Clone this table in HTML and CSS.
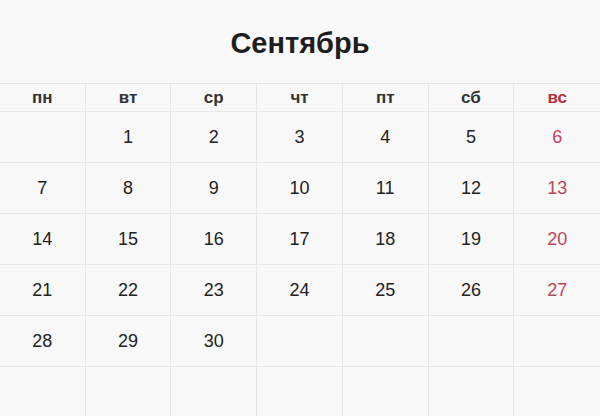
FILE: index.html
```html
<!DOCTYPE html>
<html lang="ru">
<head>
<meta charset="utf-8">
<title>Сентябрь</title>
<link rel="stylesheet" href="styles.css">
</head>
<body>
<div class="page">
  <div class="head">
    <h1 class="title">Сентябрь</h1>
  </div>
  <div class="cal">
    <div class="dow">пн</div><div class="dow">вт</div><div class="dow">ср</div><div class="dow">чт</div><div class="dow">пт</div><div class="dow">сб</div><div class="dow sun">вс</div>

    <div class="day"></div><div class="day">1</div><div class="day">2</div><div class="day">3</div><div class="day">4</div><div class="day">5</div><div class="day sun">6</div>
    <div class="day">7</div><div class="day">8</div><div class="day">9</div><div class="day">10</div><div class="day">11</div><div class="day">12</div><div class="day sun">13</div>
    <div class="day">14</div><div class="day">15</div><div class="day">16</div><div class="day">17</div><div class="day">18</div><div class="day">19</div><div class="day sun">20</div>
    <div class="day">21</div><div class="day">22</div><div class="day">23</div><div class="day">24</div><div class="day">25</div><div class="day">26</div><div class="day sun">27</div>
    <div class="day">28</div><div class="day">29</div><div class="day">30</div><div class="day"></div><div class="day"></div><div class="day"></div><div class="day"></div>
    <div class="day"></div><div class="day"></div><div class="day"></div><div class="day"></div><div class="day"></div><div class="day"></div><div class="day"></div>
  </div>
</div>
</body>
</html>
```

FILE: styles.css
```css
html, body {
  margin: 0;
  padding: 0;
  background: #f8f8f8;
}

.page {
  width: 600px;
  height: 416px;
  overflow: hidden;
  font-family: "Liberation Sans", Arial, sans-serif;
  color: #222;
}

.head {
  height: 83px;
  padding-top: 26px;
  box-sizing: border-box;
}

.title {
  margin: 0;
  text-align: center;
  font-size: 29px;
  line-height: 34px;
  font-weight: bold;
  color: #1e1e1e;
}

.cal {
  display: grid;
  grid-template-columns: repeat(7, 1fr);
  grid-template-rows: 28px repeat(6, 51px);
  border-top: 1px solid #e6e6e6;
}

.dow,
.day {
  display: flex;
  align-items: center;
  justify-content: center;
  border-right: 1px solid #e6e6e6;
  border-bottom: 1px solid #e6e6e6;
}

.dow:nth-child(7n),
.day:nth-child(7n) {
  border-right: none;
}

.dow {
  font-size: 17px;
  font-weight: bold;
  color: #333;
}

.day {
  font-size: 18px;
  color: #222;
}

.dow.sun {
  color: #b3303f;
}

.day.sun {
  color: #b84658;
}
```
